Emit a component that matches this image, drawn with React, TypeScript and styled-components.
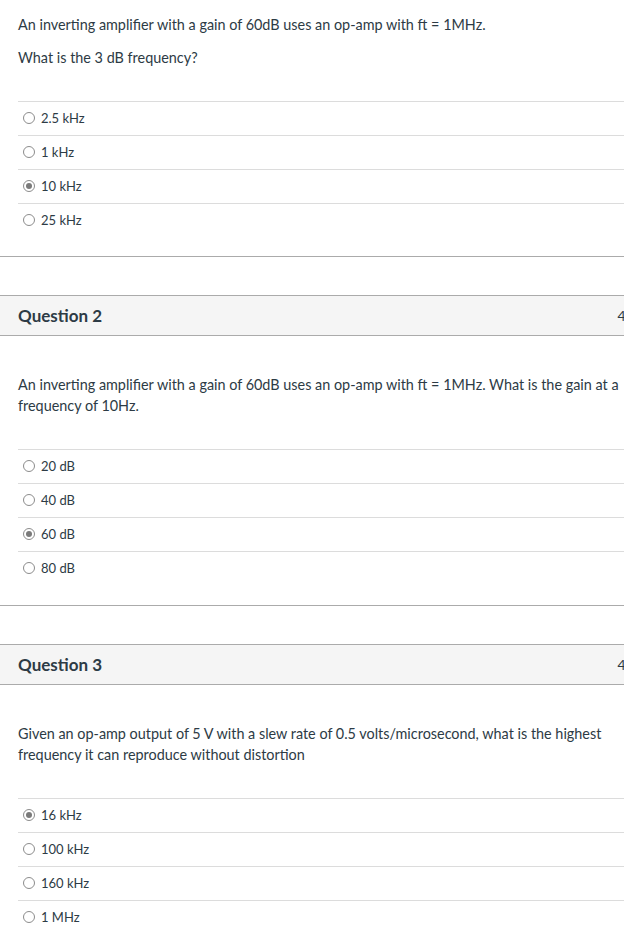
import React from "react";
import styled, { createGlobalStyle } from "styled-components";

const GlobalStyle = createGlobalStyle`
  html, body {
    margin: 0;
    padding: 0;
    background: #ffffff;
    overflow-x: hidden;
  }
  body {
    font-family: Lato, "Open Sans", "Liberation Sans", sans-serif;
    color: #2d3b45;
  }
`;

const Page = styled.div`
  width: 666px;
  display: flex;
  flex-direction: column;
  gap: 38px;
`;

const QuestionBlock = styled.section<{ $bottom: number }>`
  border-bottom: 1px solid #ababab;
  padding-bottom: ${(p) => p.$bottom}px;
`;

const Header = styled.header`
  display: flex;
  justify-content: space-between;
  align-items: center;
  height: 39px;
  padding: 0 18px;
  background: #f5f5f5;
  border-top: 1px solid #ababab;
  border-bottom: 1px solid #ababab;
`;

const Title = styled.h2`
  margin: 0;
  font-size: 17px;
  font-weight: 700;
  color: #2d3b45;
`;

const Points = styled.span`
  font-size: 14px;
  color: #2d3b45;
`;

const Body = styled.div<{ $top: number }>`
  padding: ${(p) => p.$top}px 18px 0 18px;
`;

const Text = styled.p`
  margin: 0 0 12px 0;
  font-size: 14.4px;
  line-height: 21px;
  &:last-of-type {
    margin-bottom: 0;
  }
`;

const Answers = styled.ul`
  list-style: none;
  margin: 33px 0 0 0;
  padding: 0;
`;

const AnswerRow = styled.li`
  box-sizing: border-box;
  display: flex;
  align-items: center;
  gap: 6px;
  height: 34px;
  padding: 0 0 1px 5px;
  border-top: 1px solid #dcdcdc;
  font-size: 13px;
`;

const Radio = styled.span<{ $checked: boolean }>`
  box-sizing: border-box;
  width: 12px;
  height: 12px;
  border-radius: 50%;
  border: 1px solid #8c8c8c;
  background: #ffffff;
  display: flex;
  align-items: center;
  justify-content: center;
  &::after {
    content: "";
    width: 6px;
    height: 6px;
    border-radius: 50%;
    background: ${(p) => (p.$checked ? "#7a7a7a" : "transparent")};
  }
`;

type Q = {
  title?: string;
  texts: string[];
  options: string[];
  selected: number;
};

const questions: Q[] = [
  {
    texts: [
      "An inverting amplifier with a gain of 60dB uses an op-amp with ft = 1MHz.",
      "What is the 3 dB frequency?",
    ],
    options: ["2.5 kHz", "1 kHz", "10 kHz", "25 kHz"],
    selected: 2,
  },
  {
    title: "Question 2",
    texts: [
      "An inverting amplifier with a gain of 60dB uses an op-amp with ft = 1MHz. What is the gain at a frequency of 10Hz.",
    ],
    options: ["20 dB", "40 dB", "60 dB", "80 dB"],
    selected: 2,
  },
  {
    title: "Question 3",
    texts: [
      "Given an op-amp output of 5 V with a slew rate of 0.5 volts/microsecond, what is the highest frequency it can reproduce without distortion",
    ],
    options: ["16 kHz", "100 kHz", "160 kHz", "1 MHz"],
    selected: 0,
  },
];

export default function App() {
  return (
    <>
      <GlobalStyle />
      <Page>
        {questions.map((q, i) => (
          <QuestionBlock key={i} $bottom={q.title ? 20 : 19}>
            {q.title && (
              <Header>
                <Title>{q.title}</Title>
                <Points>4 pts</Points>
              </Header>
            )}
            <Body $top={q.title ? 38 : 14}>
              {q.texts.map((t, j) => (
                <Text key={j}>{t}</Text>
              ))}
              <Answers>
                {q.options.map((o, k) => (
                  <AnswerRow key={k}>
                    <Radio $checked={k === q.selected} />
                    <span>{o}</span>
                  </AnswerRow>
                ))}
              </Answers>
            </Body>
          </QuestionBlock>
        ))}
      </Page>
    </>
  );
}
